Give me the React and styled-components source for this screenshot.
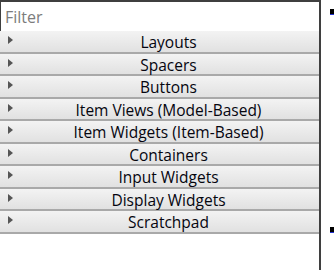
import React from "react";
import styled, { createGlobalStyle } from "styled-components";

const Global = createGlobalStyle`
  html, body { margin: 0; padding: 0; background: #ffffff; }
  body { font-family: "Open Sans", "Noto Sans", sans-serif; }
`;

const Screen = styled.div`
  display: flex;
  width: 334px;
  height: 270px;
  background: #ffffff;
`;

const Panel = styled.div`
  width: 319px;
  display: flex;
  flex-direction: column;
  border-top: 2px solid #3f3f3f;
  box-sizing: border-box;
`;

const Divider = styled.div`
  width: 2px;
  background: #3f3f3f;
`;

const Side = styled.div`
  flex: 1;
  display: flex;
  flex-direction: column;
  padding: 9px 0 0 9px;
  gap: 212px;
`;

const Marker = styled.div`
  width: 4px;
  height: 5px;
  background: #000;
  border-bottom: 1px solid #2030d0;
`;

const FilterBox = styled.div`
  height: 29px;
  border-left: 1px solid #3f3f3f;
  display: flex;
  align-items: center;
  padding-left: 4px;
  font-size: 16px;
  color: #7c7c7c;
  background: #fff;
`;

const Row = styled.div`
  height: 20.5px;
  border-bottom: 2px solid #a9a9a9;
  background: linear-gradient(#f3f3f3, #e1e1e1);
  display: flex;
  align-items: center;
  position: relative;
  font-size: 15.5px;
  color: #05050f;
`;

const Arrow = styled.span`
  position: absolute;
  left: 8px;
  top: 5px;
  width: 0;
  height: 0;
  border-top: 4px solid transparent;
  border-bottom: 4px solid transparent;
  border-left: 5px solid #555555;
`;

const Label = styled.span`
  flex: 1;
  text-align: center;
  line-height: 20px;
  padding: 2px 0 0 18px;
`;

const items = [
  "Layouts",
  "Spacers",
  "Buttons",
  "Item Views (Model-Based)",
  "Item Widgets (Item-Based)",
  "Containers",
  "Input Widgets",
  "Display Widgets",
  "Scratchpad",
];

export default function App() {
  return (
    <>
      <Global />
      <Screen>
        <Panel>
          <FilterBox>Filter</FilterBox>
          {items.map((t) => (
            <Row key={t}>
              <Arrow />
              <Label>{t}</Label>
            </Row>
          ))}
        </Panel>
        <Divider />
        <Side>
          <Marker />
          <Marker />
        </Side>
      </Screen>
    </>
  );
}
